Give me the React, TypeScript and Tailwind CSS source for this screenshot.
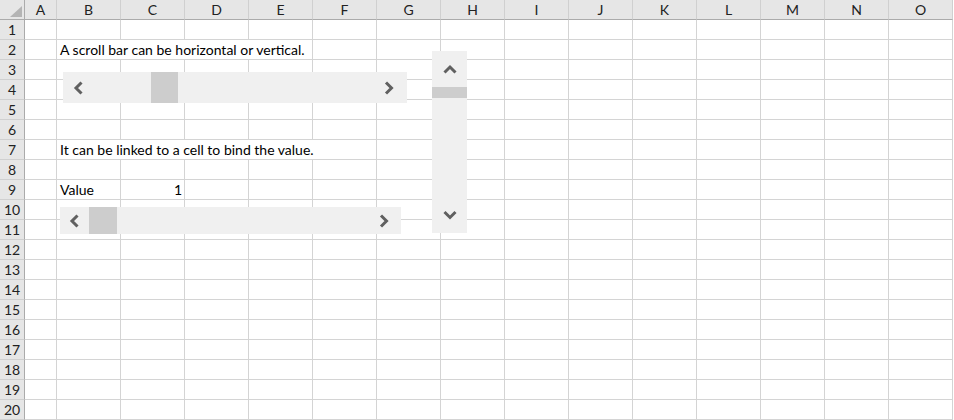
const columns = ["A", "B", "C", "D", "E", "F", "G", "H", "I", "J", "K", "L", "M", "N", "O"];
const rows = Array.from({ length: 20 }, (_, i) => i + 1);

const font = { fontFamily: "Lato, 'Open Sans', sans-serif" };

function Chevron({ dir }: { dir: "left" | "right" | "up" | "down" }) {
  const points = {
    left: "8.5,1.5 3,7 8.5,12.5",
    right: "2,1.5 7.5,7 2,12.5",
    up: "1.5,8.5 7,3 12.5,8.5",
    down: "1.5,2 7,7.5 12.5,2",
  }[dir];
  const horiz = dir === "left" || dir === "right";
  return (
    <svg
      width={horiz ? 11 : 14}
      height={horiz ? 14 : 11}
      viewBox={horiz ? "0 0 11 14" : "0 0 14 11"}
      className="block shrink-0"
    >
      <polyline points={points} fill="none" stroke="#606060" strokeWidth="3" strokeLinecap="butt" strokeLinejoin="miter" />
    </svg>
  );
}

const overflow = "relative z-10 h-[19px] flex items-center bg-white pl-[3px] pr-[2px]";

function cellText(row: number, col: string) {
  if (col === "B" && row === 2) return <span className={overflow}>A scroll bar can be horizontal or vertical.</span>;
  if (col === "B" && row === 7) return <span className={overflow}>It can be linked to a cell to bind the value.</span>;
  if (col === "B" && row === 9) return <span className="pl-[3px]">Value</span>;
  if (col === "C" && row === 9) return <span className="ml-auto pr-[2px]">1</span>;
  return null;
}

export default function App() {
  return (
    <div className="relative w-[954px] h-[420px] overflow-hidden bg-white text-black" style={font}>
      {/* column headers */}
      <div className="flex h-[20px]">
        <div className="relative w-[25px] shrink-0 bg-[#e6e6e6] border-r border-b border-[#ababab]">
          <svg width="12" height="11" viewBox="0 0 12 11" className="absolute right-[2px] bottom-[2px]">
            <polygon points="12,0 12,11 0,11" fill="#b4b4b4" />
          </svg>
        </div>
        {columns.map((c) => (
          <div
            key={c}
            className={`${c === "A" ? "w-[32px]" : "w-[64px]"} shrink-0 flex items-center justify-center bg-[#e6e6e6] border-r border-b border-r-[#d0d0d0] border-b-[#ababab] text-[14px] text-[#222]`}
          >
            {c}
          </div>
        ))}
      </div>

      {/* rows */}
      {rows.map((r) => (
        <div key={r} className="flex h-[20px]">
          <div className="w-[25px] shrink-0 flex items-center justify-center bg-[#e6e6e6] border-r border-b border-r-[#ababab] border-b-[#d0d0d0] text-[14px] text-[#222]">
            {r}
          </div>
          {columns.map((c) => (
            <div
              key={c}
              className={`${c === "A" ? "w-[32px]" : "w-[64px]"} shrink-0 flex items-center border-r border-b border-[#d4d4d4] text-[14px] whitespace-nowrap overflow-visible`}
            >
              {cellText(r, c)}
            </div>
          ))}
        </div>
      ))}

      {/* horizontal scroll bar 1 */}
      <div className="absolute z-20 left-[63px] top-[72px] w-[344px] h-[31px] bg-[#f0f0f0] flex items-center">
        <div className="w-[30px] flex justify-center">
          <Chevron dir="left" />
        </div>
        <div className="ml-[58px] w-[27px] h-full bg-[#cdcdcd]" />
        <div className="ml-auto w-[36px] flex justify-center">
          <Chevron dir="right" />
        </div>
      </div>

      {/* vertical scroll bar */}
      <div className="absolute z-20 left-[432px] top-[51px] w-[35px] h-[182px] bg-[#f0f0f0] flex flex-col items-center">
        <div className="h-[36px] w-full flex items-center justify-center">
          <Chevron dir="up" />
        </div>
        <div className="w-full h-[11px] bg-[#cdcdcd]" />
        <div className="mt-auto h-[36px] w-full flex items-center justify-center">
          <Chevron dir="down" />
        </div>
      </div>

      {/* horizontal scroll bar 2 */}
      <div className="absolute z-20 left-[60px] top-[207px] w-[341px] h-[27px] bg-[#f0f0f0] flex items-center">
        <div className="w-[29px] flex justify-center">
          <Chevron dir="left" />
        </div>
        <div className="w-[28px] h-full bg-[#cdcdcd]" />
        <div className="ml-auto w-[33px] flex justify-center">
          <Chevron dir="right" />
        </div>
      </div>
    </div>
  );
}
